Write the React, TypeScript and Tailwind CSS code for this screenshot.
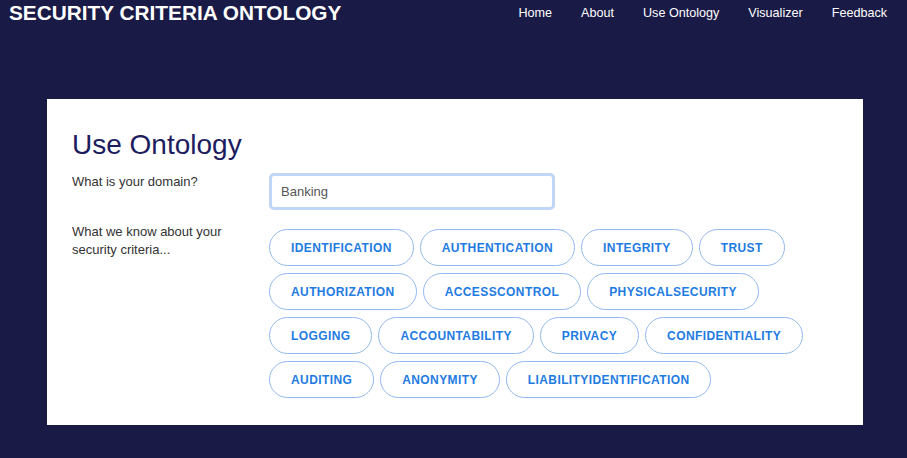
import React, { useState } from 'react'

const navLinks = ['Home', 'About', 'Use Ontology', 'Visualizer', 'Feedback']

const criteria = [
  'IDENTIFICATION', 'AUTHENTICATION', 'INTEGRITY', 'TRUST',
  'AUTHORIZATION', 'ACCESSCONTROL', 'PHYSICALSECURITY',
  'LOGGING', 'ACCOUNTABILITY', 'PRIVACY', 'CONFIDENTIALITY',
  'AUDITING', 'ANONYMITY', 'LIABILITYIDENTIFICATION'
]

const Chip = ({ text }: { text: string }) => {
  return (
    <button className="h-[37px] px-[21px] rounded-full border border-[#93b9ee] bg-white text-[#1e7be2] text-[12px] font-bold tracking-[0.4px] leading-none">
      {text}
    </button>
  )
}

const App = () => {
  const [domain, setDomain] = useState('Banking')

  return (
    <div className="min-h-[458px] bg-[#1a1a46] font-['Liberation_Sans',Arial,sans-serif]">
      <nav className="h-[27px] flex items-center justify-between pl-[9px] pr-5">
        <span className="text-white text-[20.8px] font-bold leading-none">SECURITY CRITERIA ONTOLOGY</span>
        <ul className="flex gap-[29px]">
          {navLinks.map((link) => (
            <li key={link} className="text-white text-[12.6px] leading-none">{link}</li>
          ))}
        </ul>
      </nav>

      <div className="ml-[47px] mt-[72px] w-[816px] bg-white pl-[25px] pt-[29px] pb-[27px]">
        <h1 className="text-[#1c1c5e] text-[28px] leading-[34px]">Use Ontology</h1>

        <div className="flex items-start mt-[11px]">
          <label className="w-[197px] text-[13px] leading-[18px] text-[#333]">What is your domain?</label>
          <input
            className="w-[286px] h-[37px] border-[3px] border-[#bfd6f6] rounded-[5px] px-[9px] text-[13px] text-[#555] outline-none"
            value={domain}
            onChange={(e) => setDomain(e.target.value)}
          />
        </div>

        <div className="flex items-start mt-[13px]">
          <p className="w-[197px] text-[13px] leading-[18px] text-[#333]">What we know about your<br />security criteria...</p>
          <div className="flex flex-wrap gap-x-[6px] gap-y-[7px] pt-[6px] w-[560px]">
            {criteria.map((c) => <Chip key={c} text={c} />)}
          </div>
        </div>
      </div>
    </div>
  )
}

export default App
